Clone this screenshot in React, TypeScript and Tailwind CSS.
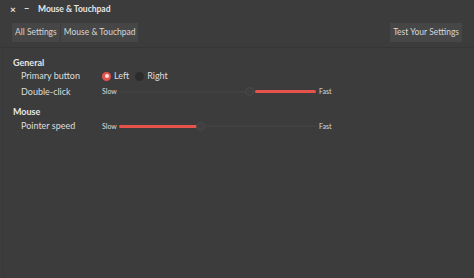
const font = { fontFamily: 'Lato, "Noto Sans", sans-serif' };

function Slider({ pos, fillRight }: { pos: number; fillRight?: boolean }) {
  // pos: handle position as fraction of the track width
  return (
    <div className="relative w-[197px] h-[9px] flex items-center">
      <div className="absolute inset-x-0 h-[2px] bg-[#414141]" />
      <div
        className="absolute h-[3px] bg-[#e5534b] rounded-full"
        style={fillRight ? { left: `${pos * 100 + 3}%`, right: 0 } : { left: 0, width: `${pos * 100 - 1}%` }}
      />
      <div
        className="absolute w-[9px] h-[9px] rounded-full bg-[#3f3f3f] border border-[#4a4a4a]"
        style={{ left: `calc(${pos * 100}% - 4px)` }}
      />
    </div>
  );
}

function Radio({ on, label }: { on?: boolean; label: string }) {
  return (
    <div className="flex items-center gap-[3px]">
      <div
        className={
          on
            ? "w-[9px] h-[9px] rounded-full bg-[#e5534b] flex items-center justify-center"
            : "w-[9px] h-[9px] rounded-full bg-[#2c2c2c]"
        }
      >
        {on && <div className="w-[4px] h-[4px] rounded-full bg-[#f8e0de]" />}
      </div>
      <span>{label}</span>
    </div>
  );
}

export default function App() {
  return (
    <div className="w-[474px] h-[278px] bg-[#3c3c3c] text-[#dcdcdc] flex flex-col" style={font}>
      <div className="h-[18px] flex items-center text-[8.5px] font-bold text-[#e6e6e6] pl-[10px]">
        <span className="w-[14px] text-[10px]">×</span>
        <span className="w-[14px] text-[9px]">−</span>
        <span>Mouse &amp; Touchpad</span>
      </div>
      <div className="h-[30px] flex items-center justify-between px-[12px] text-[8.5px] text-[#d6d6d6] border-b border-[#363636]">
        <div className="flex gap-[1px]">
          <div className="bg-[#464646] px-[3px] py-[3px]">All Settings</div>
          <div className="bg-[#464646] px-[3px] py-[3px]">Mouse &amp; Touchpad</div>
        </div>
        <div className="bg-[#464646] px-[3px] py-[3px]">Test Your Settings</div>
      </div>
      <div className="flex-1 border-l border-[#383838] ml-[3px] pl-[9px] pt-[8px] text-[9px]">
        <div className="font-bold text-[#e6e6e6] h-[13px]">General</div>
        <div className="pl-[8px] flex items-center h-[14px]">
          <span className="w-[81px]">Primary button</span>
          <div className="flex gap-[6px]">
            <Radio on label="Left" />
            <Radio label="Right" />
          </div>
        </div>
        <div className="pl-[8px] flex items-center h-[17px] text-[7px]">
          <span className="w-[81px] text-[9px]">Double-click</span>
          <span className="w-[17px]">Slow</span>
          <Slider pos={0.66} fillRight />
          <span className="ml-[3px]">Fast</span>
        </div>
        <div className="font-bold text-[#e6e6e6] h-[14px] mt-[5px] flex items-center">Mouse</div>
        <div className="pl-[8px] flex items-center h-[14px] text-[7px]">
          <span className="w-[81px] text-[9px]">Pointer speed</span>
          <span className="w-[17px]">Slow</span>
          <Slider pos={0.41} />
          <span className="ml-[3px]">Fast</span>
        </div>
      </div>
    </div>
  );
}
